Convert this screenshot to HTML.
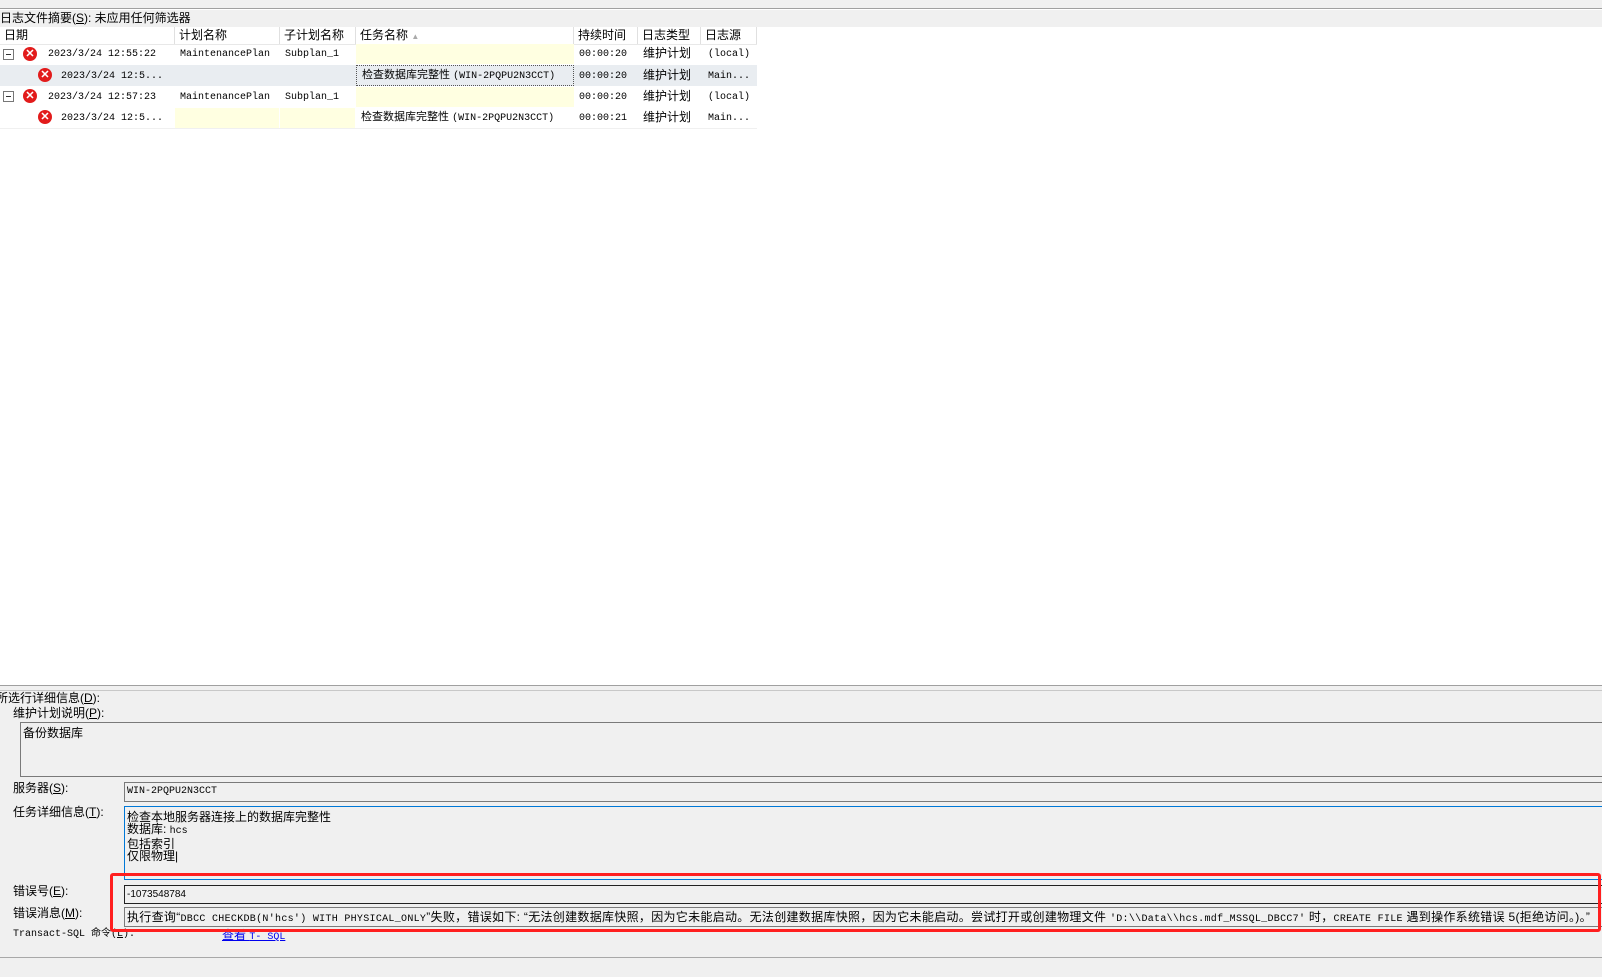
<!DOCTYPE html>
<html><head><meta charset="utf-8"><style>
*{margin:0;padding:0;box-sizing:border-box}
body{width:1602px;height:977px;overflow:hidden;background:#fff;font-family:"Liberation Sans","Noto Sans CJK SC",sans-serif;font-size:12px;color:#000;position:relative}
.a{position:absolute;white-space:nowrap}
.m{font-family:"Liberation Mono","Noto Sans CJK SC",monospace;font-size:10px}
.cell{position:absolute;height:21px;line-height:23px;padding-left:5px;overflow:hidden;white-space:nowrap}
.y{background:#ffffe1}
.hd{position:absolute;top:27px;height:17px;line-height:16px;padding-left:4px;border-right:1px solid #e0e0e0;background:#fff}
.ic{position:absolute;width:14px;height:14px;border-radius:50%;background:#e21b1b;color:#fff;font:bold 11px/14px "Liberation Sans",sans-serif;text-align:center}
.ex{position:absolute;width:11px;height:11px;border:1px solid #777;background:#fff}
.ex:after{content:"";position:absolute;left:2px;top:4px;width:5px;height:1px;background:#333}
.box{position:absolute;border:1px solid #7a7a7a;background:#f0f0f0}
.lbl{position:absolute;left:13px;white-space:nowrap}
</style></head><body>
<div class="a" style="left:0;top:0;width:1602px;height:9px;background:#f0f0f0;border-bottom:1px solid #a0a0a0"></div>
<div class="a" style="left:0;top:10px;width:1602px;height:17px;background:#f0f0f0;line-height:16px">日志文件摘要(<u>S</u>): 未应用任何筛选器</div>
<div class="hd" style="left:0;width:175px">日期</div>
<div class="hd" style="left:175px;width:105px">计划名称</div>
<div class="hd" style="left:280px;width:76px">子计划名称</div>
<div class="hd" style="left:356px;width:218px">任务名称 <span style="color:#aaa;font-size:8px">▲</span></div>
<div class="hd" style="left:574px;width:64px">持续时间</div>
<div class="hd" style="left:638px;width:63px">日志类型</div>
<div class="hd" style="left:701px;width:56px">日志源</div>
<div class="a" style="left:0;top:44px;width:757px;height:1px;background:#e8e8e8"></div>

<div class="ex" style="left:3px;top:49px"></div><div class="ic" style="left:23px;top:47px">✕</div>
<div class="cell m" style="left:43px;top:43px">2023/3/24 12:55:22</div>
<div class="cell m" style="left:175px;top:43px">MaintenancePlan</div>
<div class="cell m" style="left:280px;top:43px">Subplan_1</div>
<div class="cell y" style="left:356px;top:44px;width:218px;height:20px"></div>
<div class="cell m" style="left:574px;top:43px">00:00:20</div>
<div class="cell" style="left:638px;top:43px;line-height:21px">维护计划</div>
<div class="cell m" style="left:703px;top:43px">(local)</div>

<div class="a" style="left:0;top:65px;width:757px;height:21px;background:#e9edf1"></div>
<div class="ic" style="left:38px;top:68px">✕</div>
<div class="cell m" style="left:56px;top:65px">2023/3/24 12:5...</div>
<div class="cell" style="left:356px;top:65px;width:218px;border:1px dotted #555;line-height:19px;font-size:11px">检查数据库完整性 <span class="m">(WIN-2PQPU2N3CCT)</span></div>
<div class="cell m" style="left:574px;top:65px">00:00:20</div>
<div class="cell" style="left:638px;top:65px;line-height:21px">维护计划</div>
<div class="cell m" style="left:703px;top:65px">Main...</div>

<div class="ex" style="left:3px;top:91px"></div><div class="ic" style="left:23px;top:89px">✕</div>
<div class="cell m" style="left:43px;top:86px">2023/3/24 12:57:23</div>
<div class="cell m" style="left:175px;top:86px">MaintenancePlan</div>
<div class="cell m" style="left:280px;top:86px">Subplan_1</div>
<div class="cell y" style="left:356px;top:87px;width:218px;height:20px"></div>
<div class="cell m" style="left:574px;top:86px">00:00:20</div>
<div class="cell" style="left:638px;top:86px;line-height:21px">维护计划</div>
<div class="cell m" style="left:703px;top:86px">(local)</div>

<div class="ic" style="left:38px;top:110px">✕</div>
<div class="cell m" style="left:56px;top:107px">2023/3/24 12:5...</div>
<div class="cell y" style="left:175px;top:108px;width:104px;height:20px"></div>
<div class="cell y" style="left:280px;top:108px;width:75px;height:20px"></div>
<div class="cell" style="left:356px;top:107px;font-size:11px;line-height:21px">检查数据库完整性 <span class="m">(WIN-2PQPU2N3CCT)</span></div>
<div class="cell m" style="left:574px;top:107px">00:00:21</div>
<div class="cell" style="left:638px;top:107px;line-height:21px">维护计划</div>
<div class="cell m" style="left:703px;top:107px">Main...</div>
<div class="a" style="left:0;top:128px;width:757px;height:1px;background:#f0f0f0"></div>

<div class="a" style="left:0;top:685px;width:1602px;height:292px;background:#f0f0f0;border-top:1px solid #a0a0a0"></div>
<div class="a" style="left:0;top:690px;width:1602px;height:1px;background:#c8c8c8"></div>
<div class="a" style="left:-4px;top:690px;line-height:16px">所选行详细信息(<u>D</u>):</div>
<div class="lbl" style="top:705px;line-height:16px">维护计划说明(<u>P</u>):</div>
<div class="box" style="left:20px;top:722px;width:1590px;height:55px;padding:1px 2px">备份数据库</div>
<div class="lbl" style="top:780px;line-height:16px">服务器(<u>S</u>):</div>
<div class="box m" style="left:124px;top:782px;width:1490px;height:20px;line-height:18px;padding-left:2px">WIN-2PQPU2N3CCT</div>
<div class="lbl" style="top:804px;line-height:16px">任务详细信息(<u>T</u>):</div>
<div class="box" style="left:124px;top:806px;width:1490px;height:74px;border-color:#0078d7;line-height:12px;padding:4px 2px;font-size:12px">检查本地服务器连接上的数据库完整性<br>数据库: <span class="m">hcs</span><br>包括索引<br>仅限物理|</div>
<div class="lbl" style="top:883px;line-height:16px">错误号(<u>E</u>):</div>
<div class="box" style="left:124px;top:885px;width:1490px;height:19px;border-color:#222;line-height:17px;padding-left:2px;font-size:10px;font-family:'Liberation Sans',sans-serif">-1073548784</div>
<div class="lbl" style="top:905px;line-height:16px">错误消息(<u>M</u>):</div>
<div class="box" style="left:124px;top:907px;width:1490px;height:20px;line-height:18px;padding-left:2px;overflow:hidden;white-space:nowrap;font-size:12px;letter-spacing:0.3px">执行查询“<span class="m">DBCC CHECKDB(N'hcs')  WITH  PHYSICAL_ONLY</span>”失败，错误如下: “无法创建数据库快照，因为它未能启动。无法创建数据库快照，因为它未能启动。尝试打开或创建物理文件 <span class="m">'D:\\Data\\hcs.mdf_MSSQL_DBCC7'</span> 时，<span class="m">CREATE FILE</span> 遇到操作系统错误 5(拒绝访问。)。”</div>
<div class="lbl m" style="top:927px;line-height:16px">Transact-SQL 命令(<u>L</u>):</div>
<div class="a" style="left:222px;top:927px;line-height:16px;color:#0000ee;text-decoration:underline">查看 <span class="m">T- SQL</span></div>
<div class="a" style="left:110px;top:873px;width:1491px;height:59px;border:3px solid #ff1f1f;border-radius:3px"></div>
<div class="a" style="left:0;top:957px;width:1602px;height:1px;background:#a8a8a8"></div>
</body></html>
